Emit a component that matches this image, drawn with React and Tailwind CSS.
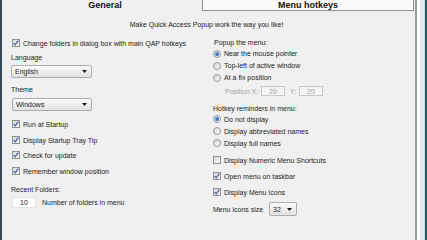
import React from "react";

function Check({ checked }) {
  return (
    <span className="w-[8px] h-[8px] shrink-0 border border-[#8f8f8f] bg-linear-to-br from-[#d8d8d8] to-[#fbfbfb] flex items-center justify-center">
      {checked && (
        <svg width="6" height="6" viewBox="0 0 6 6">
          <path d="M0.7 3.1 L2.3 4.9 L5.3 0.7" stroke="#3c5a9a" strokeWidth="1.2" fill="none" />
        </svg>
      )}
    </span>
  );
}

function Radio({ checked }) {
  return (
    <span className="w-[8px] h-[8px] shrink-0 rounded-full border border-[#9a9a9a] bg-linear-to-br from-[#d4d4d4] to-[#fbfbfb] flex items-center justify-center">
      {checked && (
        <span className="w-[4px] h-[4px] rounded-full bg-linear-to-br from-[#6aa6e8] to-[#1d4f9c]" />
      )}
    </span>
  );
}

function CheckRow({ checked, label, className = "" }) {
  return (
    <div className={`h-[12px] flex items-center gap-[3px] ${className}`}>
      <Check checked={checked} />
      <span>{label}</span>
    </div>
  );
}

function RadioRow({ checked, label, className = "" }) {
  return (
    <div className={`flex items-center gap-[3px] ${className}`}>
      <Radio checked={checked} />
      <span>{label}</span>
    </div>
  );
}

function Combo({ value, className = "" }) {
  return (
    <div
      className={`h-[13px] border border-[#acacac] rounded-[2px] bg-linear-to-b from-[#fafafa] to-[#e2e2e2] flex items-center justify-between pl-[3px] pr-[4px] ${className}`}
    >
      <span>{value}</span>
      <svg width="5" height="3" viewBox="0 0 5 3">
        <path d="M0 0 L5 0 L2.5 3 Z" fill="#1a1a1a" />
      </svg>
    </div>
  );
}

export default function App() {
  return (
    <div className="w-[427px] h-[240px] flex bg-[#f0f0f0] overflow-hidden font-['Liberation_Sans',Arial,sans-serif] text-[7px] text-[#1c1c1c] leading-none">
      <div className="w-[2px] bg-[#354b53]" />

      <div className="w-[415px] flex flex-col border-r-2 border-[#9c9c9c]">
        <div className="h-[11px] flex">
          <div className="w-[200px] flex items-center justify-center pl-[6px] font-bold text-[9px] text-[#111]">
            General
          </div>
          <div className="flex-1 mr-[1px] border-l border-r border-b border-[#8c8f96] bg-[#fafafa] flex items-center justify-center font-bold text-[9px] text-[#111]">
            Menu hotkeys
          </div>
        </div>

        <div className="mt-[7px] h-[12px] flex items-center justify-center pr-[4px]">
          Make Quick Access Popup work the way you like!
        </div>

        <div className="flex pl-[9px]">
          <div className="w-[202px] flex flex-col">
            <CheckRow checked label="Change folders in dialog box with main QAP hotkeys" className="mt-[7px] ml-[1px]" />
            <div className="mt-[3px] h-[10px] flex items-center">Language</div>
            <Combo value="English" className="mt-[3px] w-[81px]" />
            <div className="mt-[6px] h-[10px] flex items-center">Theme</div>
            <Combo value="Windows" className="mt-[4px] w-[80px] ml-[1px]" />
            <CheckRow checked label="Run at Startup" className="mt-[7px] ml-[1px]" />
            <CheckRow checked label="Display Startup Tray Tip" className="mt-[4px] ml-[1px]" />
            <CheckRow checked label="Check for update" className="mt-[3px] ml-[1px]" />
            <CheckRow checked label="Remember window position" className="mt-[4px] ml-[1px]" />
            <div className="mt-[7px] h-[10px] flex items-center">Recent Folders:</div>
            <div className="mt-[3px] h-[11px] flex items-center">
              <div className="ml-[1px] w-[24px] h-[11px] bg-white border border-[#e3e3e3] flex items-center justify-center">
                10
              </div>
              <span className="ml-[6px]">Number of folders in menu</span>
            </div>
          </div>

          <div className="flex-1 flex flex-col">
            <div className="mt-[7px] h-[10px] flex items-center pl-[1px]">Popup the menu:</div>
            <div className="mt-[1px] flex flex-col gap-[1px]">
              <RadioRow checked label="Near the mouse pointer" className="h-[11px]" />
              <RadioRow label="Top-left of active window" className="h-[11px]" />
              <RadioRow label="At a fix position" className="h-[11px]" />
            </div>
            <div className="mt-[3px] h-[10px] flex items-center pl-[12px] text-[#a3a3a3]">
              <span className="w-[36px]">Position X:</span>
              <div className="w-[24px] h-[10px] border border-[#c9c9c9] bg-[#f4f4f4] flex items-center justify-center">
                20
              </div>
              <span className="ml-[5px] w-[9px]">Y:</span>
              <div className="w-[24px] h-[10px] border border-[#c9c9c9] bg-[#f4f4f4] flex items-center justify-center">
                20
              </div>
            </div>
            <div className="mt-[7px] h-[10px] flex items-center">Hotkey reminders in menu:</div>
            <RadioRow checked label="Do not display" className="h-[12px]" />
            <RadioRow label="Display abbreviated names" className="h-[12px]" />
            <RadioRow label="Display full names" className="h-[12px]" />
            <CheckRow label="Display Numeric Menu Shortcuts" className="mt-[5px]" />
            <CheckRow checked label="Open menu on taskbar" className="mt-[4px]" />
            <CheckRow checked label="Display Menu Icons" className="mt-[4px]" />
            <div className="mt-[4px] h-[14px] flex items-center">
              <span className="w-[56px]">Menu icons size</span>
              <Combo value="32" className="w-[28px] h-[14px]" />
            </div>
          </div>
        </div>
      </div>

      <div className="w-[3px] bg-white" />
      <div className="w-[4px] bg-[#e4e9ec]" />
      <div className="w-[1px] bg-[#bfe3ee]" />
      <div className="w-[2px] bg-[#2f5561]" />
    </div>
  );
}
